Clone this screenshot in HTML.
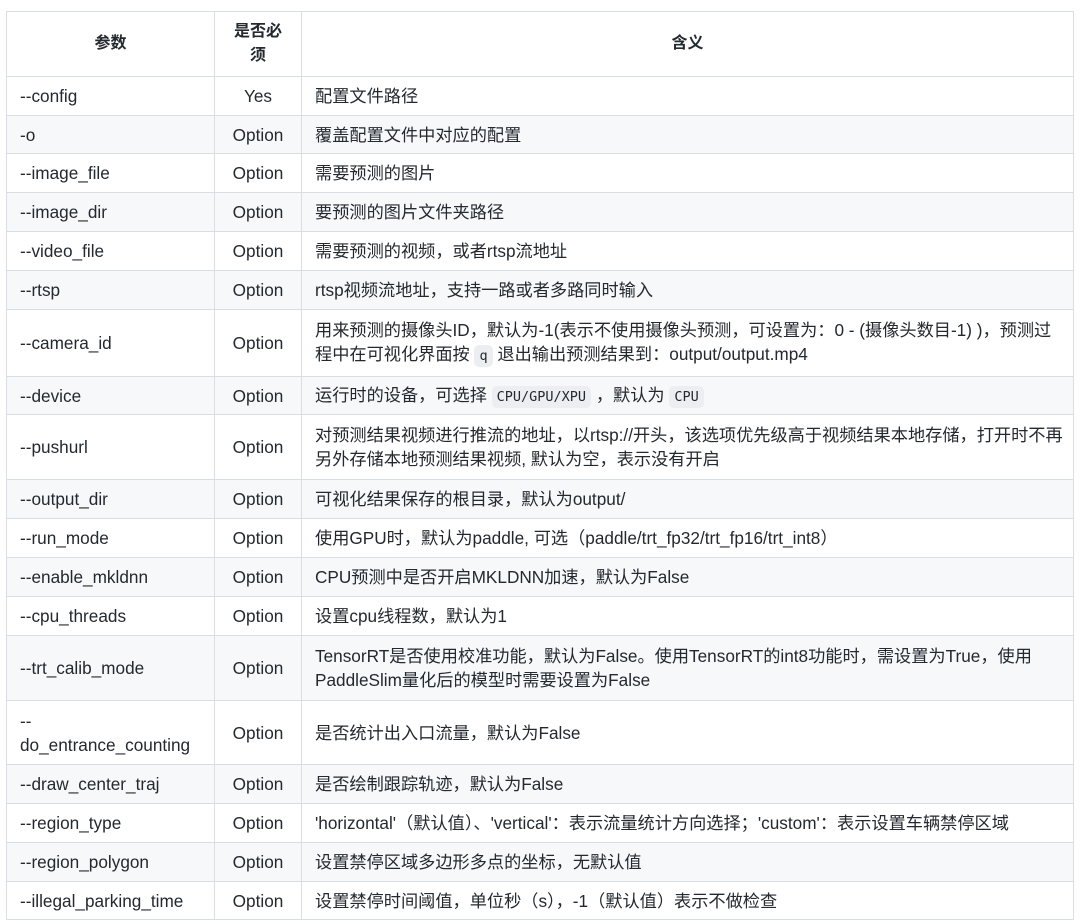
<!DOCTYPE html>
<html><head><meta charset="utf-8"><style>
html,body{margin:0;padding:0;background:#fff;width:1080px;height:924px;overflow:hidden}
table{position:absolute;left:6px;top:11px;border-collapse:collapse;table-layout:fixed;width:1067px;font-family:"Liberation Sans","Noto Sans CJK SC",sans-serif;font-size:17.2px;color:#24292f}
td,th{border:1px solid #d8dee4;padding:0 13px;line-height:24px;vertical-align:middle;overflow:hidden;white-space:nowrap}
th{font-weight:bold;text-align:center;font-size:16px}
td:nth-child(2){text-align:center;padding:0 4px}
tr:nth-child(odd):not(:first-child) td{background:#f6f8fa}
code{font-family:"DejaVu Sans Mono","Liberation Mono",monospace;font-size:13.5px;background:#eceef1;border-radius:5px;padding:3px 5px}
.s{height:39px}.t{height:38px}
</style></head><body>
<table>
<colgroup><col style="width:208px"><col style="width:87px"><col style="width:772px"></colgroup>
<tr style="height:65px"><th>参数</th><th>是否必<br>须</th><th>含义</th></tr>
<tr class="s"><td>--config</td><td>Yes</td><td>配置文件路径</td></tr>
<tr class="t"><td>-o</td><td>Option</td><td>覆盖配置文件中对应的配置</td></tr>
<tr class="s"><td>--image_file</td><td>Option</td><td>需要预测的图片</td></tr>
<tr class="s"><td>--image_dir</td><td>Option</td><td>要预测的图片文件夹路径</td></tr>
<tr class="s"><td>--video_file</td><td>Option</td><td>需要预测的视频，或者rtsp流地址</td></tr>
<tr class="s"><td>--rtsp</td><td>Option</td><td>rtsp视频流地址，支持一路或者多路同时输入</td></tr>
<tr style="height:67px"><td>--camera_id</td><td>Option</td><td>用来预测的摄像头ID，默认为-1(表示不使用摄像头预测，可设置为：0 - (摄像头数目-1) )，预测过<br>程中在可视化界面按 <code>q</code> 退出输出预测结果到：output/output.mp4</td></tr>
<tr class="t"><td>--device</td><td>Option</td><td>运行时的设备，可选择 <code>CPU/GPU/XPU</code> ，默认为 <code>CPU</code></td></tr>
<tr style="height:65px"><td>--pushurl</td><td>Option</td><td>对预测结果视频进行推流的地址，以rtsp://开头，该选项优先级高于视频结果本地存储，打开时不再<br>另外存储本地预测结果视频, 默认为空，表示没有开启</td></tr>
<tr class="s"><td>--output_dir</td><td>Option</td><td>可视化结果保存的根目录，默认为output/</td></tr>
<tr class="s"><td>--run_mode</td><td>Option</td><td>使用GPU时，默认为paddle, 可选（paddle/trt_fp32/trt_fp16/trt_int8）</td></tr>
<tr class="s"><td>--enable_mkldnn</td><td>Option</td><td>CPU预测中是否开启MKLDNN加速，默认为False</td></tr>
<tr class="s"><td>--cpu_threads</td><td>Option</td><td>设置cpu线程数，默认为1</td></tr>
<tr style="height:65px"><td>--trt_calib_mode</td><td>Option</td><td>TensorRT是否使用校准功能，默认为False。使用TensorRT的int8功能时，需设置为True，使用<br>PaddleSlim量化后的模型时需要设置为False</td></tr>
<tr style="height:64px"><td>--<br>do_entrance_counting</td><td>Option</td><td>是否统计出入口流量，默认为False</td></tr>
<tr class="s"><td>--draw_center_traj</td><td>Option</td><td>是否绘制跟踪轨迹，默认为False</td></tr>
<tr class="s"><td>--region_type</td><td>Option</td><td>'horizontal'（默认值）、'vertical'：表示流量统计方向选择；'custom'：表示设置车辆禁停区域</td></tr>
<tr class="s"><td>--region_polygon</td><td>Option</td><td>设置禁停区域多边形多点的坐标，无默认值</td></tr>
<tr class="t"><td>--illegal_parking_time</td><td>Option</td><td>设置禁停时间阈值，单位秒（s），-1（默认值）表示不做检查</td></tr>
</table>
</body></html>
